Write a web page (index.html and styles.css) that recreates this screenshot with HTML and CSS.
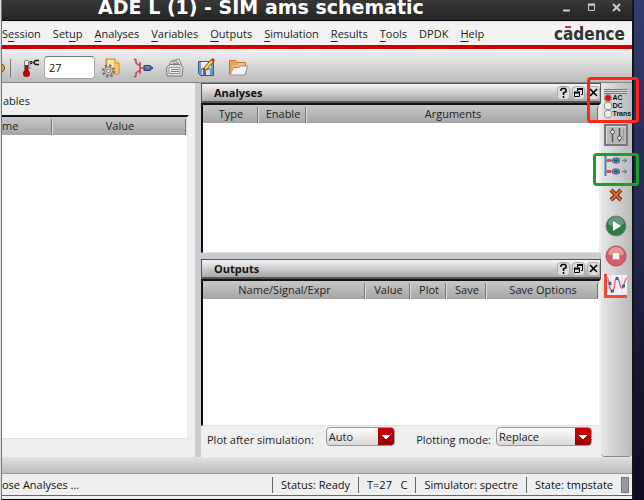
FILE: index.html
```
<!DOCTYPE html>
<html lang="en">
<head>
<meta charset="utf-8">
<title>ADE L (1) - SIM ams schematic</title>
<link rel="stylesheet" href="styles.css">
</head>
<body>
<div class="desktop">
  <div class="window">
    <header class="titlebar">
      <h1>ADE L (1) - SIM ams schematic</h1>
      <div class="window-buttons">
        <button aria-label="Minimize"><svg width="9" height="9"><path d="M1 7.500h7" stroke="#ccc" stroke-width="2"/></svg></button>
        <button aria-label="Maximize"><svg width="9" height="9"><path d="M1.500 2h6v5.500h-6z" fill="none" stroke="#ccc"/><path d="M1 1.500h7" stroke="#ccc" stroke-width="2"/></svg></button>
        <button aria-label="Close"><svg width="9" height="9"><path d="M1 1l7 7M8 1l-7 7" stroke="#ccc" stroke-width="2"/></svg></button>
      </div>
    </header>

    <nav class="menubar">
      <a href="#">S<u>e</u>ssion</a>
      <a href="#">Set<u>u</u>p</a>
      <a href="#"><u>A</u>nalyses</a>
      <a href="#"><u>V</u>ariables</a>
      <a href="#"><u>O</u>utputs</a>
      <a href="#"><u>S</u>imulation</a>
      <a href="#"><u>R</u>esults</a>
      <a href="#"><u>T</u>ools</a>
      <a href="#">DPDK</a>
      <a href="#"><u>H</u>elp</a>
      <span class="brand">c<span class="macron">a</span>dence</span>
    </nav>

    <div class="toolbar">
      <svg class="knob" width="3" height="12"><circle cx="-2" cy="6" r="4.500" fill="#e2ae20" stroke="#5e5030"/></svg>
      <span class="tool-sep"></span>
      <label class="temperature" for="temp" aria-label="Temperature">
        <svg width="18" height="20" viewBox="0 0 18 20">
          <rect x="2.500" y="2" width="4" height="13" rx="2" fill="#eee" stroke="#777"/>
          <path d="M3 7h3v7H3z" fill="#c4000a"/>
          <circle cx="4.500" cy="15.500" r="3.500" fill="#b80008"/>
          <path d="M7 7h2M7 10h2" stroke="#777"/>
          <path d="M8 3.500h2v2h-2z" fill="none" stroke="#111"/>
          <path d="M17 2.500h-3.500L12 4v1l1.500 1.500H17" fill="none" stroke="#111" stroke-width="1.500"/>
        </svg>
      </label>
      <input id="temp" class="temp-input" type="text" value="27">
      <button class="tool" aria-label="Setup design"><svg width="20" height="20" viewBox="0 0 20 20">
        <path d="M5 1h9l4 4v11H5z" fill="#f7c766" stroke="#c48730"/><path d="M7 2h6v9H7z" fill="#ffe6a4"/><path d="M14 1v4h4" fill="#fff1ca" stroke="#c48730"/>
        <circle cx="7.500" cy="13" r="5.500" fill="none" stroke="#77736d" stroke-width="2.500" stroke-dasharray="2.200 2.120"/>
        <circle cx="7.500" cy="13" r="4" fill="#d8d6d1" stroke="#817d77"/><circle cx="7.500" cy="13" r="1.800" fill="#f6f3e8" stroke="#77736d"/>
      </svg></button>
      <button class="tool" aria-label="Choose analyses"><svg width="20" height="20" viewBox="0 0 20 20">
        <path d="M1 1l2 1v3l4 3M7 4v12M7 12l-4 3v3l-2 1M7 10h5" fill="none" stroke="#c3423f" stroke-width="1.500"/>
        <path d="M11 7.500h5.500q2 0 2 2.500t-2 2.500H11z" fill="#496da0" stroke="#29466e"/><path d="M12 9h4" stroke="#8ca9cf"/><path d="M18 10h2" stroke="#555" stroke-width="2"/>
      </svg></button>
      <button class="tool" aria-label="Edit variables"><svg width="20" height="20" viewBox="0 0 20 20">
        <path d="M4 8l2-5 8-2 3 7" fill="#e8e8e8" stroke="#858585"/><path d="M7 4l5-1M7 6l7-1M11 3l4 4" stroke="#8a8a8a"/>
        <path d="M1.500 9.500L5 6.500h10l3 3-1 8.500h-15z" fill="#dedede" stroke="#777"/><path d="M4 9.500h11v6H4z" fill="#f1f1f1" stroke="#909090"/><path d="M6 11.500h8M6 13.500h8" stroke="#777"/>
      </svg></button>
      <button class="tool" aria-label="Save state"><svg width="20" height="20" viewBox="0 0 20 20">
        <path d="M1.500 3.500h15v14h-13l-2-2z" fill="#7597cb" stroke="#34558c"/><path d="M4 4h10v6H4z" fill="#eef4ff"/><path d="M5 12h8v5H5z" fill="#d9dee8"/><path d="M6 13h3v4H6z" fill="#4e6da0"/>
        <path d="M7 12L16 2" stroke="#704914" stroke-width="4"/><path d="M8 11L16 2" stroke="#ffd337" stroke-width="2.500"/><path d="M15 3l2-2" stroke="#c52d34" stroke-width="3"/><path d="M6 13l1-2 1 1z" fill="#111"/>
      </svg></button>
      <button class="tool" aria-label="Load state"><svg width="20" height="20" viewBox="0 0 20 20">
        <path d="M.500 16.500V2.500h6l2 2h8v4" fill="#efa257" stroke="#ca6e20"/><path d="M1 16l3-9h4l2-2h6v3" fill="#f7bd7c"/>
        <path d="M1 17L4.500 9.500H10L11.500 8H18.500L16 17z" fill="#f4f4f4" stroke="#a38d78"/>
      </svg></button>
    </div>

    <main class="workspace">
      <section class="variables">
        <h2>ables</h2>
        <div class="frame">
          <table class="grid">
            <colgroup><col class="w-name"><col></colgroup>
            <thead><tr><th class="cut">me</th><th>Value</th></tr></thead>
          </table>
        </div>
      </section>

      <div class="docks">
        <section class="dock">
          <div class="dock-title"><h2>Analyses</h2>
            <div class="dock-buttons">
              <button aria-label="Help"><svg width="11" height="11"><path d="M3 4V2.500L4 1.500h3l1 1v2L5.500 6v2M5.500 9v2" fill="none" stroke="#000" stroke-width="1.600"/></svg></button>
              <button aria-label="Float"><svg width="11" height="11"><path d="M4.500 4V2.500h5v5H8M1.500 5.500h5v4h-5z" fill="none" stroke="#000"/><path d="M4 2h6M1 5.500h6" stroke="#000" stroke-width="2"/></svg></button>
              <button aria-label="Close"><svg width="11" height="11"><path d="M2 2l7 7M9 2l-7 7" stroke="#000" stroke-width="1.700"/></svg></button>
            </div>
          </div>
          <div class="frame">
            <table class="grid">
              <colgroup><col class="w-type"><col class="w-enable"><col></colgroup>
              <thead><tr><th>Type</th><th>Enable</th><th>Arguments</th></tr></thead>
            </table>
          </div>
        </section>

        <section class="dock">
          <div class="dock-title"><h2>Outputs</h2>
            <div class="dock-buttons">
              <button aria-label="Help"><svg width="11" height="11"><path d="M3 4V2.500L4 1.500h3l1 1v2L5.500 6v2M5.500 9v2" fill="none" stroke="#000" stroke-width="1.600"/></svg></button>
              <button aria-label="Float"><svg width="11" height="11"><path d="M4.500 4V2.500h5v5H8M1.500 5.500h5v4h-5z" fill="none" stroke="#000"/><path d="M4 2h6M1 5.500h6" stroke="#000" stroke-width="2"/></svg></button>
              <button aria-label="Close"><svg width="11" height="11"><path d="M2 2l7 7M9 2l-7 7" stroke="#000" stroke-width="1.700"/></svg></button>
            </div>
          </div>
          <div class="frame">
            <table class="grid">
              <colgroup><col class="w-expr"><col class="w-value"><col class="w-plot"><col class="w-save"><col></colgroup>
              <thead><tr><th>Name/Signal/Expr</th><th>Value</th><th>Plot</th><th>Save</th><th>Save Options</th></tr></thead>
            </table>
          </div>
        </section>

        <div class="plot-options">
          <label for="plot-after">Plot after simulation:</label>
          <select id="plot-after" class="select-short"><option>Auto</option></select>
          <label class="push" for="plot-mode">Plotting mode:</label>
          <select id="plot-mode" class="select-long"><option>Replace</option></select>
        </div>
      </div>

      <aside class="sidebar">
        <span class="grip"></span>
        <button class="analysis-kinds" aria-label="Choose analyses">
          <span class="kind picked">AC</span><span class="kind">DC</span><span class="kind">Trans</span>
        </button>
        <button class="side-sliders" aria-label="Edit variables"><svg width="24" height="22" viewBox="0 0 24 22">
          <rect x="1" y="1" width="22" height="20" fill="#b9b9b9" stroke="#777" stroke-width="2"/><path d="M2.500 19V2.500h19" fill="none" stroke="#ddd"/>
          <path d="M8.500 4v14M15.500 4v14" stroke="#555" stroke-width="1.500"/><circle cx="8.500" cy="8" r="2" fill="#eee" stroke="#555"/><circle cx="15.500" cy="14" r="2" fill="#eee" stroke="#555"/><path d="M19.500 5v12" stroke="#999"/>
        </svg></button>
        <button class="side-outputs" aria-label="Setup outputs"><svg width="24" height="22" viewBox="0 0 24 22">
          <path d="M1.500 0v21" stroke="#5876a5" stroke-width="2"/><path d="M2 5.500h14M18 5.500h5M2 16.500h14M18 16.500h5" stroke="#6a83ab" stroke-width="1.300"/>
          <path d="M20.500 3.500l2 2-2 2M20.500 14.500l2 2-2 2" fill="none" stroke="#4a6898"/>
          <path d="M3 5.500h4M3 16.500h4" stroke="#ce4a50" stroke-width="3"/>
          <rect x="8.500" y="3" width="7" height="5" rx="2" fill="#7390bc" stroke="#3e5d90"/><rect x="8.500" y="14" width="7" height="5" rx="2" fill="#7390bc" stroke="#3e5d90"/><path d="M10 5.500h4M10 16.500h4" stroke="#334f7d" stroke-width="2"/>
        </svg></button>
        <button class="side-delete" aria-label="Delete"><svg width="14" height="14" viewBox="0 0 14 14"><path d="M2 2l10 10M12 2L2 12" stroke="#602812" stroke-width="4"/><path d="M2 2l10 10M12 2L2 12" stroke="#dc6b2d" stroke-width="2"/></svg></button>
        <button class="side-run" aria-label="Run"><svg width="22" height="22" viewBox="0 0 22 22"><circle cx="11" cy="11" r="10" fill="#2f7a4b" stroke="#75877b"/><path d="M3 9a8 7 0 0 1 16 0q-8 5-16 0z" fill="#609b75"/><path d="M8 6l8 5-8 5z" fill="#fff"/></svg></button>
        <button class="side-stop" aria-label="Stop"><svg width="22" height="22" viewBox="0 0 22 22"><circle cx="11" cy="11" r="10" fill="#d45c65" stroke="#a4575c"/><path d="M3 9a8 7 0 0 1 16 0q-8 4-16 0z" fill="#e89698"/><rect x="7.500" y="7.500" width="7" height="7" fill="#f3f3ef" stroke="#c99a94"/></svg></button>
        <button class="side-plot" aria-label="Plot"><svg width="24" height="24" viewBox="0 0 24 24"><path d="M3 1h20v21H3z" fill="#f2f2fa"/><path d="M7 1v20M12 1v20M18 1v20M3 7h20M3 14h20" stroke="#dedeed"/><path d="M3 3c2 0 2 15 5 15S10 4 13 4s2 10 5 10 2-10 5-10" fill="none" stroke="#dc7474" stroke-width="1.500"/><path d="M1.500 0v22.500H23" fill="none" stroke="#ee4932" stroke-width="3"/><path d="M5 8.500h2v2H5zM7.500 16h2v2h-2zM12 3.500h2v2h-2zM18.500 11h2v2h-2z" fill="#8ca4c9" stroke="#304c7d"/></svg></button>
      </aside>
    </main>

    <div class="lower-bar"></div>
    <footer class="statusbar">
      <span class="hint">ose Analyses ...</span>
      <span class="cell">Status: Ready</span>
      <span class="cell">T=27 &nbsp; C</span>
      <span class="cell">Simulator: spectre</span>
      <span class="cell">State: tmpstate</span>
      <span class="progress"></span>
    </footer>
  </div>
  <div class="mark mark-red"></div>
  <div class="mark mark-green"></div>
</div>
</body>
</html>
```
FILE: styles.css
```
* { box-sizing: border-box; }

body {
  margin: 0;
  font: 11px/16px "Open Sans", "Noto Sans", sans-serif;
  color: #222;
}

h1, h2 { margin: 0; }
button { padding: 0; border: 0; background: none; font: inherit; color: inherit; }
svg { display: block; }

.desktop {
  position: relative;
  height: 100vh;
  padding-right: 10px;
  overflow: hidden;
  border-left: 1px solid #dcdfe4;
  background: linear-gradient(160deg, #303a68 0, #35406f 6%, #526aa0 13%, #303b6d 19%, #343f72 30%, #29305c 48%, #252950 62%, #171630 82%, #0f0c20 100%);
}

.window {
  display: flex;
  flex-direction: column;
  height: 100%;
  border-left: 1px solid #2e86c8;
  border-right: 2px solid #151515;
  border-bottom: 1px solid #000;
  background: #efefef;
}

.titlebar {
  display: flex;
  justify-content: center;
  position: relative;
  height: 21px;
  padding-right: 112px;
  border-bottom: 1px solid #000;
  background: linear-gradient(#383838, #252525);
  color: #fff;
}
.titlebar h1 {
  font: bold 19px/14px "DejaVu Sans", sans-serif;
  white-space: nowrap;
}
.window-buttons { position: absolute; right: 11px; top: 3px; display: flex; gap: 16px; }

.menubar {
  display: flex;
  align-items: center;
  gap: 12px;
  height: 28px;
  padding: 2px 7px 0 0;
  border-bottom: 4px solid #cc0005;
  background: linear-gradient(#e4e4e4, #f3f3f3 3px, #f1f1f1);
}
.menubar a { color: inherit; text-decoration: none; white-space: nowrap; }
.menubar a u { text-underline-offset: 3px; }
.brand { margin-left: auto; font: bold 17px/20px "DejaVu Sans Condensed", "DejaVu Sans", sans-serif; color: #333; }
.macron { position: relative; }
.macron::before { content: ""; position: absolute; left: 2px; top: 2px; width: 6px; height: 2px; background: #e0343c; }

.toolbar {
  display: flex;
  align-items: center;
  height: 34px;
  padding-top: 4px;
  border-bottom: 1px solid #858585;
  background: linear-gradient(#f2f2f2, #dedede 12px, #bbb);
}
.tool-sep { width: 1px; height: 18px; margin: 0 11px 0 5px; background: #777; }
.temperature { margin-right: 4px; }
.temp-input {
  width: 51px;
  height: 23px;
  margin-right: 6px;
  padding: 0 4px;
  border: 1px solid #aaa;
  border-top-color: #777;
  border-radius: 4px;
  background: #fff;
  font: 11px/16px "Open Sans", "Noto Sans", sans-serif;
  color: #111;
}
.tool { margin-right: 12px; }

.workspace { display: flex; flex: 1; min-height: 0; }

.variables {
  display: flex;
  flex-direction: column;
  flex: 0 0 199px;
  padding: 10px 6px 18px 0;
  border-right: 6px solid #cbccd2;
}
.variables h2 { margin: 0 0 6px; padding-left: 1px; font: inherit; }

.frame {
  flex: 1;
  min-height: 0;
  border-top: 2px solid #111;
  border-right: 2px solid #eee;
  border-bottom: 1px solid #e2e2e2;
  background: #fff;
}

.grid { width: 100%; border-collapse: separate; border-spacing: 0; table-layout: fixed; }
.grid th {
  height: 18px;
  padding: 0;
  font-weight: normal;
  line-height: 16px;
  white-space: nowrap;
  background:
    linear-gradient(#777, #777) right 1px bottom / 1px 16px no-repeat,
    linear-gradient(#ddd, #ddd) right bottom / 1px 16px no-repeat,
    linear-gradient(#c8c8c8, #a5a5a5);
}
.grid .cut { text-align: left; }
.w-name { width: 51px; }
.w-type { width: 56px; }
.w-enable { width: 48px; }
.w-expr { width: 163px; }
.w-value { width: 45px; }
.w-plot { width: 36px; }
.w-save { width: 40px; }

.docks { display: flex; flex-direction: column; flex: 1; min-width: 0; }
.dock { display: flex; flex-direction: column; flex: 1; min-height: 0; }
.dock:first-child { flex-basis: 3px; }
.dock + .dock { border-top: 6px solid #cbccd2; flex-basis: 6px; }
.dock .frame { border-left: 2px solid #111; }
.dock-title {
  display: flex;
  align-items: center;
  justify-content: space-between;
  height: 20px;
  padding-left: 12px;
  border: 1px solid #555;
  border-bottom-width: 2px;
  background: linear-gradient(#f6f6f6, #a6a6a6);
  color: #111;
}
.dock-title h2 { font: bold 11px/16px "Open Sans", "Noto Sans", sans-serif; }
.dock-buttons { display: flex; gap: 2px; }
.dock-buttons button {
  display: grid;
  place-items: center;
  width: 13px;
  height: 14px;
  border: 1px solid #aaa;
  border-radius: 4px;
  background: #dedede;
}

.plot-options {
  display: flex;
  height: 31px;
  padding: 1px 9px 0 6px;
}
.plot-options label { padding-top: 5px; white-space: nowrap; }
.plot-options .push { margin-left: auto; }
.plot-options select {
  appearance: none;
  height: 19px;
  padding: 0 2px;
  border: 1px solid #999;
  border-radius: 4px;
  background:
    conic-gradient(from 315deg at 50% 100%, #fff 90deg, transparent 0) right 4px center / 8px 4px no-repeat,
    linear-gradient(#cc0005, #930004) right / 16px 100% no-repeat,
    linear-gradient(#fff, #d8d8d8);
  font: inherit;
  color: #222;
}
.select-short { width: 69px; margin-left: 12px; }
.select-long { width: 96px; margin-left: 5px; }

.sidebar {
  display: flex;
  flex-direction: column;
  align-items: center;
  flex: 0 0 31px;
  padding-right: 2px;
  border-bottom: 1px solid #888;
  border-radius: 0 0 4px 4px;
  background: linear-gradient(90deg, #e6e6e6, #b9b9b9);
}
.grip { width: 23px; height: 5px; margin-top: 6px; border-top: 1px solid #777; border-bottom: 1px solid #777; background: linear-gradient(#ddd 1px, #777 1px 2px, #ddd 2px); }
.analysis-kinds { width: 24px; }
.kind {
  display: flex;
  align-items: center;
  gap: 1px;
  font: bold 7px/8px "Liberation Sans", sans-serif;
  color: #111;
  white-space: nowrap;
}
.kind::before { content: ""; flex: 0 0 6px; height: 6px; border: 1px solid #999; border-radius: 3px; background: #eee; }
.picked::before { background: radial-gradient(#cc1010 50%, #f0c0c0); }
.side-sliders { margin-top: 6px; }
.side-outputs { margin-top: 9px; }
.side-delete { margin-top: 11px; }
.side-run { margin-top: 13px; }
.side-stop { margin-top: 8px; }
.side-plot { margin-top: 7px; }

.lower-bar { height: 17px; border-bottom: 1px solid #999; background: linear-gradient(#e2e2e2, #bbb); }

.statusbar {
  display: flex;
  align-items: center;
  height: 22px;
  margin-bottom: 3px;
  padding-right: 3px;
  border-bottom: 1px solid #666;
  color: #111;
  white-space: nowrap;
}
.hint { margin-right: auto; }
.cell { padding: 0 8px; border-left: 1px solid #666; }
.progress { width: 8px; height: 16px; border: 1px solid #777; background: #9999a1; }

.mark { position: absolute; border-radius: 4px; }
.mark-red { right: 5px; top: 77px; width: 52px; height: 46px; border: 3px solid #ff2418; }
.mark-green { right: 5px; top: 153px; width: 46px; height: 33px; border: 3px solid #17a424; }
```
